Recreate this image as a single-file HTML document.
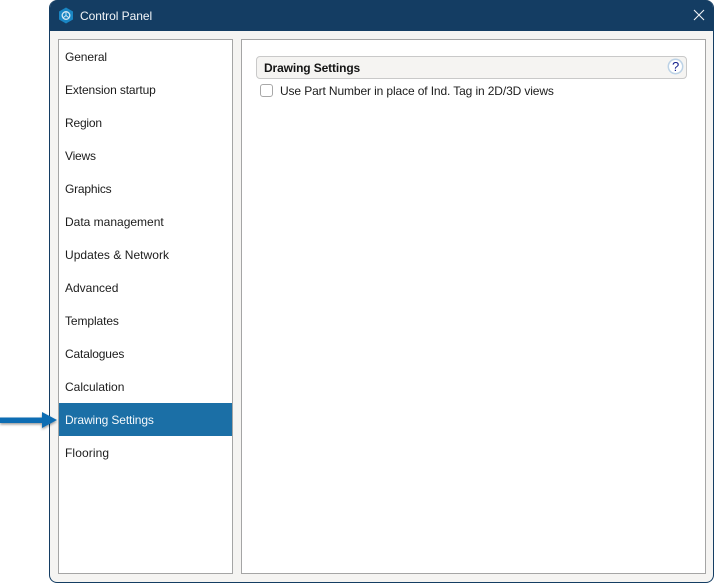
<!DOCTYPE html>
<html>
<head>
<meta charset="utf-8">
<style>
html,body{margin:0;padding:0;width:715px;height:583px;overflow:hidden;background:#fff;font-family:"Liberation Sans",sans-serif;}
.a{position:absolute;box-sizing:border-box;}
#win{left:49px;top:0;width:665px;height:583px;background:#f5f4f2;border:1px solid #143d63;border-top:0;border-radius:8px;overflow:hidden;}
#title{left:0;top:0;width:665px;height:31px;background:#143d63;}
.t{position:absolute;white-space:nowrap;font-size:12px;line-height:16px;color:#1c1c1c;}
#left{left:58px;top:39px;width:175px;height:535px;background:#fff;border:1px solid #a5a5a5;}
#right{left:241px;top:39px;width:465px;height:535px;background:#fff;border:1px solid #a5a5a5;}
#sel{left:59px;top:403px;width:173px;height:33px;background:#1b6fa6;}
#hdr{left:256px;top:56px;width:431px;height:23px;background:#f5f4f2;border:1px solid #c9c9c9;border-radius:4px;}
#cb{left:260px;top:84px;width:13px;height:13px;background:#fff;border:1px solid #a8a8a8;border-radius:3px;}
</style>
</head>
<body>
<div class="a" id="win"><div class="a" id="title"></div></div>
<svg class="a" style="left:58px;top:7px" width="16" height="17" viewBox="0 0 16 17">
<path d="M8 .5 15 4.500V12.500L8 16.500 1 12.500V4.500Z" fill="#1a86c4"/>
<circle cx="8" cy="8.500" r="3.800" fill="none" stroke="#d5e8f4" stroke-width="1.300"/>
<path d="M8 5.500V8.500L5.500 10.500M8 8.500 10.500 10.500" fill="none" stroke="#d5e8f4" stroke-width=".9"/>
</svg>
<div class="t" style="left:80px;top:8px;color:#f2f5f8;letter-spacing:-.05px">Control Panel</div>
<svg class="a" style="left:693px;top:9px" width="12" height="12" viewBox="0 0 12 12"><path d="M1 1 11 11M11 1 1 11" stroke="#f0f3f6" stroke-width="1.100" fill="none"/></svg>

<div class="a" id="left"></div>
<div class="a" id="right"></div>
<div class="a" id="sel"></div>

<div class="t" style="left:65px;top:49px;letter-spacing:-.1px">General</div>
<div class="t" style="left:65px;top:82px;letter-spacing:-.12px">Extension startup</div>
<div class="t" style="left:65px;top:115px;letter-spacing:-.2px">Region</div>
<div class="t" style="left:65px;top:148px;letter-spacing:-.2px">Views</div>
<div class="t" style="left:65px;top:181px;letter-spacing:-.2px">Graphics</div>
<div class="t" style="left:65px;top:214px">Data management</div>
<div class="t" style="left:65px;top:247px;letter-spacing:.04px">Updates &amp; Network</div>
<div class="t" style="left:65px;top:280px">Advanced</div>
<div class="t" style="left:65px;top:313px;letter-spacing:-.1px">Templates</div>
<div class="t" style="left:65px;top:346px;letter-spacing:-.15px">Catalogues</div>
<div class="t" style="left:65px;top:379px">Calculation</div>
<div class="t" style="left:65px;top:412px;color:#f4f8fb;letter-spacing:-.12px">Drawing Settings</div>
<div class="t" style="left:65px;top:445px;letter-spacing:.1px">Flooring</div>

<div class="a" id="hdr"></div>
<div class="t" style="left:264px;top:60px;font-weight:bold;color:#151515;letter-spacing:-.12px">Drawing Settings</div>
<svg class="a" style="left:667px;top:58px" width="17" height="17" viewBox="0 0 17 17"><circle cx="8.500" cy="8.500" r="7.200" fill="#fff" stroke="#bcd2e6" stroke-width="1.500"/></svg>
<div class="t" style="left:672px;top:59px;font-size:13px;color:#14208c">?</div>
<div class="a" id="cb"></div>
<div class="t" style="left:280px;top:83px;letter-spacing:-.12px">Use Part Number in place of Ind. Tag in 2D/3D views</div>

<svg class="a" style="left:0;top:408px" width="60" height="26" viewBox="0 0 60 26">
<defs><filter id="s" x="-20%" y="-40%" width="140%" height="200%"><feDropShadow dx="0" dy="1.500" stdDeviation="1.200" flood-color="#000" flood-opacity=".4"/></filter></defs>
<path d="M0 9.500H42V4L57 12 42 20V15H0Z" fill="#0f6db3" filter="url(#s)"/>
</svg>
</body>
</html>
